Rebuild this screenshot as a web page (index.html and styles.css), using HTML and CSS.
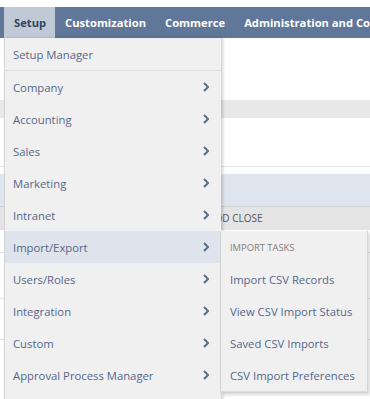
FILE: index.html
```html
<!DOCTYPE html>
<html lang="en">
<head>
    <meta charset="UTF-8">
    <title>Setup Menu</title>
    <link rel="stylesheet" href="styles.css">
</head>
<body>
    <div class="topbar"></div>
    <nav class="navbar">
        <span class="nav-tab active">Setup</span>
        <span class="nav-tab">Customization</span>
        <span class="nav-tab">Commerce</span>
        <span class="nav-tab">Administration and Contacts</span>
    </nav>

    <div class="page">
        <div class="band white b1"></div>
        <div class="band gray b2"></div>
        <div class="band white b3"></div>
        <div class="band blue b4"></div>
        <div class="band head b5"><span class="head-text">PERIOD CLOSE</span></div>
        <div class="band white b6"></div>
        <div class="band white b7"></div>
        <div class="band white b8"></div>
        <div class="band white b9"></div>
    </div>

    <ul class="menu">
        <li class="menu-item top">Setup Manager</li>
        <li class="menu-item">Company <svg class="chev" viewBox="0 0 6 10"><polyline points="1,1 5,5 1,9"/></svg></li>
        <li class="menu-item">Accounting <svg class="chev" viewBox="0 0 6 10"><polyline points="1,1 5,5 1,9"/></svg></li>
        <li class="menu-item">Sales <svg class="chev" viewBox="0 0 6 10"><polyline points="1,1 5,5 1,9"/></svg></li>
        <li class="menu-item">Marketing <svg class="chev" viewBox="0 0 6 10"><polyline points="1,1 5,5 1,9"/></svg></li>
        <li class="menu-item">Intranet <svg class="chev" viewBox="0 0 6 10"><polyline points="1,1 5,5 1,9"/></svg></li>
        <li class="menu-item hover">Import/Export <svg class="chev" viewBox="0 0 6 10"><polyline points="1,1 5,5 1,9"/></svg></li>
        <li class="menu-item">Users/Roles <svg class="chev" viewBox="0 0 6 10"><polyline points="1,1 5,5 1,9"/></svg></li>
        <li class="menu-item">Integration <svg class="chev" viewBox="0 0 6 10"><polyline points="1,1 5,5 1,9"/></svg></li>
        <li class="menu-item">Custom <svg class="chev" viewBox="0 0 6 10"><polyline points="1,1 5,5 1,9"/></svg></li>
        <li class="menu-item">Approval Process Manager <svg class="chev" viewBox="0 0 6 10"><polyline points="1,1 5,5 1,9"/></svg></li>
    </ul>

    <ul class="submenu">
        <li class="sub-head">IMPORT TASKS</li>
        <li class="sub-item">Import CSV Records</li>
        <li class="sub-item">View CSV Import Status</li>
        <li class="sub-item">Saved CSV Imports</li>
        <li class="sub-item last">CSV Import Preferences</li>
    </ul>
</body>
</html>
```

FILE: styles.css
```css
body {
    margin: 0;
    font-family: 'Open Sans', 'Noto Sans', sans-serif;
    background: #ffffff;
    width: 370px;
    height: 399px;
    overflow: hidden;
    position: relative;
}

.topbar {
    height: 7px;
    background: #ffffff;
}

.navbar {
    display: flex;
    height: 31px;
    background: #607799;
    padding-left: 4px;
    white-space: nowrap;
    overflow: hidden;
}

.nav-tab {
    display: flex;
    align-items: center;
    padding: 0 9px 0 10px;
    font-size: 11.2px;
    font-weight: 700;
    color: #ffffff;
}

.nav-tab.active {
    background: #bfcad6;
    color: #34435c;
}

.page .band {
    border-bottom: 1px solid transparent;
}

.white { background: #ffffff; }
.gray { background: #e8e8e8; }
.blue { background: #dfe5ee; }

.b1 { height: 61px; }
.b2 { height: 17px; }
.b3 { height: 48px; border-bottom-color: #e6e6e6 !important; }
.b4 { height: 31px; margin-top: 7px; }

.head {
    height: 22px;
    background: #e4e4e4;
    border-top: 1px solid #cfcfcf;
    display: flex;
    align-items: center;
    padding-left: 194px;
}

.head-text {
    font-size: 10px;
    color: #555555;
}

.b6 { height: 22px; border-bottom-color: #e2e2e2 !important; }
.b7 { height: 45px; border-bottom-color: #e2e2e2 !important; }
.b8 { height: 40px; border-bottom-color: #e2e2e2 !important; }
.b9 { height: 40px; }

.menu {
    position: absolute;
    top: 38px;
    left: 4px;
    width: 216px;
    margin: 0;
    padding: 0;
    list-style: none;
    background: #f0f0f0;
    border-left: 1px solid #d4d4d4;
    box-shadow: 2px 0 3px rgba(0, 0, 0, 0.18);
    height: 370px;
}

.menu-item {
    display: flex;
    align-items: center;
    justify-content: space-between;
    height: 32px;
    padding: 0 12px 0 8px;
    font-size: 11.3px;
    color: #56678a;
}

.menu-item.top {
    border-bottom: 1px solid #dcdcdc;
    height: 32px;
}

.menu-item.hover {
    background: #dfe3eb;
}

.chev {
    width: 6px;
    height: 10px;
    fill: none;
    stroke: #5a6e8f;
    stroke-width: 2;
}

.submenu {
    position: absolute;
    top: 231px;
    left: 220px;
    width: 146px;
    margin: 0;
    padding: 0;
    list-style: none;
    background: #f0f0f0;
    border: 1px solid #d4d4d4;
    border-top: none;
    box-shadow: 2px 2px 3px rgba(0, 0, 0, 0.15);
}

.sub-head {
    height: 32px;
    display: flex;
    align-items: center;
    padding-left: 9px;
    font-size: 9.4px;
    color: #857c78;
}

.sub-item {
    height: 32px;
    display: flex;
    align-items: center;
    padding-left: 9px;
    font-size: 11.3px;
    color: #56678a;
}

.sub-item.last {
    border-bottom: 1px solid #dcdcdc;
}
```
